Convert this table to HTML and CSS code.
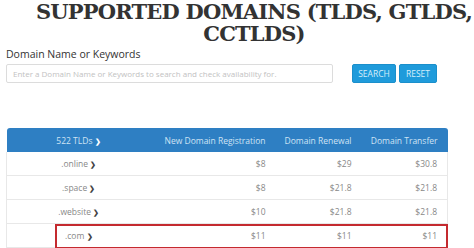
FILE: index.html
```html
<!DOCTYPE html>
<html>
<head>
<meta charset="utf-8">
<link rel="stylesheet" href="styles.css">
</head>
<body>
<div class="page">
  <h1 class="title"><span class="title-line">SUPPORTED DOMAINS (TLDS, GTLDS,</span><span class="title-line">CCTLDS)</span></h1>
  <form class="search">
    <label class="label" for="q">Domain Name or Keywords</label>
    <div class="search-row">
      <input id="q" class="input" type="text" placeholder="Enter a Domain Name or Keywords to search and check availability for.">
      <div class="buttons">
        <button type="button" class="btn">SEARCH</button>
        <button type="button" class="btn">RESET</button>
      </div>
    </div>
  </form>
  <table class="tld-table">
    <colgroup>
      <col class="w-tld"><col class="w-reg"><col class="w-ren"><col class="w-tra">
    </colgroup>
    <thead>
      <tr>
        <th class="c-tld">522 TLDs <span class="chev">&#10095;</span></th>
        <th class="c-num">New Domain Registration</th>
        <th class="c-num">Domain Renewal</th>
        <th class="c-num">Domain Transfer</th>
      </tr>
    </thead>
    <tbody>
      <tr><td class="c-tld">.online <span class="chev">&#10095;</span></td><td class="c-num">$8</td><td class="c-num">$29</td><td class="c-num">$30.8</td></tr>
      <tr><td class="c-tld">.space <span class="chev">&#10095;</span></td><td class="c-num">$8</td><td class="c-num">$21.8</td><td class="c-num">$21.8</td></tr>
      <tr><td class="c-tld">.website <span class="chev">&#10095;</span></td><td class="c-num">$10</td><td class="c-num">$21.8</td><td class="c-num">$21.8</td></tr>
      <tr class="highlight"><td class="c-tld">.com <span class="chev">&#10095;</span></td><td class="c-num">$11</td><td class="c-num">$11</td><td class="c-num">$11<span class="mark"></span></td></tr>
    </tbody>
  </table>
</div>
</body>
</html>
```

FILE: styles.css
```css
html, body {
  margin: 0;
  padding: 0;
  background: #ffffff;
}
.page {
  width: 474px;
  height: 248px;
  overflow: hidden;
  font-family: "Open Sans", "Liberation Sans", sans-serif;
  color: #555;
}
.title {
  margin: 0;
  padding: 1px 0 0 34px;
  font-family: "DejaVu Serif", serif;
  font-weight: bold;
  font-size: 21px;
  letter-spacing: -0.8px;
  line-height: 22px;
  text-align: center;
  color: #333333;
  white-space: nowrap;
}
.title-line {
  display: block;
}
.search {
  padding: 2px 6px 0 6px;
}
.label {
  display: block;
  font-size: 10.5px;
  line-height: 14px;
  color: #333;
}
.search-row {
  display: flex;
  align-items: center;
  margin-top: 3px;
}
.input {
  box-sizing: border-box;
  width: 327px;
  height: 19px;
  border: 1px solid #dcdcdc;
  border-radius: 2px;
  padding: 0 6px;
  font-family: "Open Sans", sans-serif;
  font-size: 8px;
  color: #555;
  outline: none;
}
.input::placeholder {
  color: #c2c2c2;
}
.buttons {
  display: flex;
  gap: 3px;
  margin-left: 19px;
}
.btn {
  box-sizing: border-box;
  height: 19px;
  padding: 0 4px;
  border: 1px solid #1b8fcb;
  border-radius: 2px;
  background: #1f9bdb;
  color: #d6eefa;
  font-family: "Open Sans", sans-serif;
  font-size: 8.5px;
}
.btn:first-child { width: 44px; }
.btn:last-child { width: 38px; }
.tld-table {
  margin: 45px 0 0 6px;
  width: 441px;
  table-layout: fixed;
  border-collapse: collapse;
  font-size: 8.5px;
  color: #888;
}
.w-tld { width: 144px; }
.w-reg { width: 125px; }
.w-ren { width: 86px; }
.w-tra { width: 86px; }
.tld-table th {
  background: #2e7fc3;
  color: #cfe3f4;
  font-weight: normal;
  height: 24px;
  padding: 0 10px 0 0;
  white-space: nowrap;
}
.tld-table th:first-child { border-top-left-radius: 3px; }
.tld-table th:last-child { border-top-right-radius: 3px; }
.tld-table td {
  height: 23px;
  padding: 0 10px 0 0;
  border-bottom: 1px solid #e8e8e8;
}
.tld-table td:first-child { border-left: 1px solid #e8e8e8; }
.tld-table td:last-child { border-right: 1px solid #e8e8e8; }
.tld-table .c-tld {
  text-align: center;
  padding: 0;
}
.c-num { text-align: right; }
.chev {
  font-size: 6.5px;
  color: #444;
  font-weight: bold;
}
th .chev { color: #fff; }
.highlight td:last-child { position: relative; }
.mark {
  position: absolute;
  right: -1px;
  top: 0;
  width: 389px;
  height: 21px;
  border: 2px solid #c42a2f;
}
```
